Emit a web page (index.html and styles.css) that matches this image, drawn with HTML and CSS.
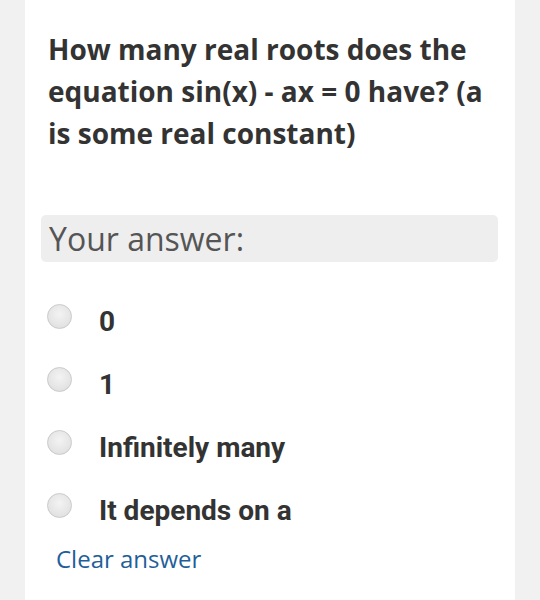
FILE: index.html
```html
<!DOCTYPE html>
<html>
<head>
<meta charset="utf-8">
<link rel="stylesheet" href="styles.css">
</head>
<body>
<div class="card">
  <h2 class="question">How many real roots does the equation sin(x) - ax = 0 have? (a is some real constant)</h2>
  <div class="answer-box">Your answer:</div>
  <ul class="options">
    <li class="option"><span class="radio"></span><span class="label">0</span></li>
    <li class="option"><span class="radio"></span><span class="label">1</span></li>
    <li class="option"><span class="radio"></span><span class="label">Infinitely many</span></li>
    <li class="option"><span class="radio"></span><span class="label">It depends on a</span></li>
  </ul>
  <a class="clear">Clear answer</a>
</div>
</body>
</html>
```
FILE: styles.css
```css
html, body {
  margin: 0;
  padding: 0;
  background: #f1f1f1;
}
body {
  height: 600px;
  overflow: hidden;
}
.card {
  margin-left: 25px;
  width: 490px;
  height: 600px;
  background: #fff;
  box-sizing: border-box;
  padding: 28px 17px 0 16px;
}
.question {
  margin: 0 0 0 7px;
  font-family: "Open Sans", sans-serif;
  font-weight: 700;
  font-size: 28px;
  line-height: 42px;
  color: #333;
  width: 450px;
}
.answer-box {
  margin-top: 61px;
  height: 47px;
  background: #eeeeee;
  border-radius: 5px;
  font-family: "Open Sans", sans-serif;
  font-size: 32px;
  line-height: 47px;
  color: #555;
  padding-left: 8px;
}
.options {
  list-style: none;
  margin: 25px 0 0 0;
  padding: 0;
}
.option {
  display: flex;
  align-items: center;
  height: 63px;
}
.radio {
  width: 23px;
  height: 23px;
  border-radius: 50%;
  border: 1px solid #cacaca;
  background: radial-gradient(circle at 50% 40%, #f3f3f3 0%, #e4e4e4 65%, #d8d8d8 100%);
  margin-left: 6px;
  margin-right: 27px;
  margin-bottom: 4px;
  flex: none;
}
.label {
  font-family: Roboto, sans-serif;
  font-weight: 700;
  font-size: 28px;
  color: #333;
  margin-top: 5px;
}
.clear {
  display: inline-block;
  margin: 4px 0 0 15px;
  font-family: "Open Sans", sans-serif;
  font-size: 24px;
  line-height: 32px;
  color: #1f5f99;
}
```
